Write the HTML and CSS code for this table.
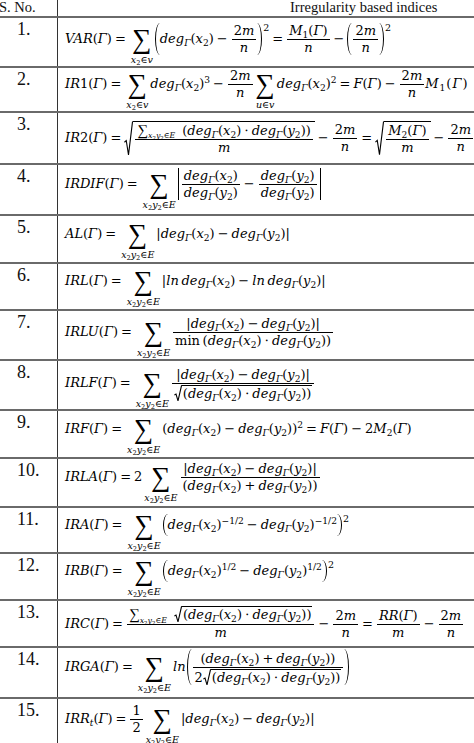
FILE: index.html
```html
<!DOCTYPE html>
<html>
<head>
<meta charset="utf-8">
<link rel="stylesheet" href="styles.css">
</head>
<body>
<div class="tbl">
  <div class="row hd"><div class="no">S. No.</div><div class="cell">Irregularity based indices</div></div>

  <!-- 1 -->
  <div class="row r1"><div class="no">1.</div><div class="cell s"><div class="f">
    <span class="t"><i>VAR</i>(<i>Γ</i>)</span><span class="op">=</span>
    <span class="sum"><span class="sig">∑</span><span class="lim"><i>x</i><sub>2</sub>∈<i>v</i></span></span>
    <span class="pw"><span class="fence">
      <span class="t"><i>deg</i><sub><i>Γ</i></sub>(<i>x</i><sub>2</sub>)</span><span class="op">−</span>
      <span class="frac"><span class="num">2<i>m</i></span><span class="den"><i>n</i></span></span>
    </span><span class="ex">2</span></span>
    <span class="op">=</span>
    <span class="frac"><span class="num"><i>M</i><sub>1</sub>(<i>Γ</i>)</span><span class="den"><i>n</i></span></span>
    <span class="op">−</span>
    <span class="pw"><span class="fence">
      <span class="frac"><span class="num">2<i>m</i></span><span class="den"><i>n</i></span></span>
    </span><span class="ex">2</span></span>
  </div></div></div>

  <!-- 2 -->
  <div class="row r2"><div class="no">2.</div><div class="cell s"><div class="f">
    <span class="t"><i>IR</i>1(<i>Γ</i>)</span><span class="op">=</span>
    <span class="sum"><span class="sig">∑</span><span class="lim"><i>x</i><sub>2</sub>∈<i>v</i></span></span>
    <span class="t"><i>deg</i><sub><i>Γ</i></sub>(<i>x</i><sub>2</sub>)<sup>3</sup></span><span class="op">−</span>
    <span class="frac"><span class="num">2<i>m</i></span><span class="den"><i>n</i></span></span>
    <span class="sum"><span class="sig">∑</span><span class="lim"><i>u</i>∈<i>v</i></span></span>
    <span class="t"><i>deg</i><sub><i>Γ</i></sub>(<i>x</i><sub>2</sub>)<sup>2</sup></span><span class="op">=</span>
    <span class="t"><i>F</i>(<i>Γ</i>)</span><span class="op">−</span>
    <span class="frac"><span class="num">2<i>m</i></span><span class="den"><i>n</i></span></span>
    <span class="t wide"><i>M</i><sub>1</sub>(<i>Γ</i>)</span>
  </div></div></div>

  <!-- 3 -->
  <div class="row r3"><div class="no">3.</div><div class="cell"><div class="f">
    <span class="t"><i>IR</i>2(<i>Γ</i>)</span><span class="op">=</span>
    <span class="sqrt"><span class="rs"><svg viewBox="0 0 10 100" preserveAspectRatio="none"><path d="M0.5 62 L2.5 57 L5 99 L9.5 1" fill="none" stroke="#000" stroke-width="1.1" vector-effect="non-scaling-stroke"/></svg></span><span class="rad">
      <span class="frac"><span class="num"><span class="ssig">∑</span><sub class="sl"><i>x</i><sub>2</sub><i>y</i><sub>2</sub>∈<i>E</i></sub><span class="gap"></span>(<i>deg</i><sub><i>Γ</i></sub>(<i>x</i><sub>2</sub>)<span class="bo">⋅</span><i>deg</i><sub><i>Γ</i></sub>(<i>y</i><sub>2</sub>))</span><span class="den"><i>m</i></span></span>
    </span></span>
    <span class="op">−</span>
    <span class="frac"><span class="num">2<i>m</i></span><span class="den"><i>n</i></span></span>
    <span class="op">=</span>
    <span class="sqrt"><span class="rs"><svg viewBox="0 0 10 100" preserveAspectRatio="none"><path d="M0.5 62 L2.5 57 L5 99 L9.5 1" fill="none" stroke="#000" stroke-width="1.1" vector-effect="non-scaling-stroke"/></svg></span><span class="rad">
      <span class="frac"><span class="num"><i>M</i><sub>2</sub>(<i>Γ</i>)</span><span class="den"><i>m</i></span></span>
    </span></span>
    <span class="op">−</span>
    <span class="frac"><span class="num">2<i>m</i></span><span class="den"><i>n</i></span></span>
  </div></div></div>

  <!-- 4 -->
  <div class="row r4"><div class="no">4.</div><div class="cell s"><div class="f">
    <span class="t"><i>IRDIF</i>(<i>Γ</i>)</span><span class="op">=</span>
    <span class="sum"><span class="sig">∑</span><span class="lim"><i>x</i><sub>2</sub><i>y</i><sub>2</sub>∈<i>E</i></span></span>
    <span class="fence abs">
      <span class="frac"><span class="num"><i>deg</i><sub><i>Γ</i></sub>(<i>x</i><sub>2</sub>)</span><span class="den"><i>deg</i><sub><i>Γ</i></sub>(<i>y</i><sub>2</sub>)</span></span>
      <span class="op">−</span>
      <span class="frac"><span class="num"><i>deg</i><sub><i>Γ</i></sub>(<i>y</i><sub>2</sub>)</span><span class="den"><i>deg</i><sub><i>Γ</i></sub>(<i>y</i><sub>2</sub>)</span></span>
    </span>
  </div></div></div>

  <!-- 5 -->
  <div class="row r5"><div class="no">5.</div><div class="cell s"><div class="f">
    <span class="t"><i>AL</i>(<i>Γ</i>)</span><span class="op">=</span>
    <span class="sum"><span class="sig">∑</span><span class="lim"><i>x</i><sub>2</sub><i>y</i><sub>2</sub>∈<i>E</i></span></span>
    <span class="t">|<i>deg</i><sub><i>Γ</i></sub>(<i>x</i><sub>2</sub>)<span class="bo">−</span><i>deg</i><sub><i>Γ</i></sub>(<i>y</i><sub>2</sub>)|</span>
  </div></div></div>

  <!-- 6 -->
  <div class="row r6"><div class="no">6.</div><div class="cell s"><div class="f">
    <span class="t"><i>IRL</i>(<i>Γ</i>)</span><span class="op">=</span>
    <span class="sum"><span class="sig">∑</span><span class="lim"><i>x</i><sub>2</sub><i>y</i><sub>2</sub>∈<i>E</i></span></span>
    <span class="t">|<i>ln</i>&#8201;<i>deg</i><sub><i>Γ</i></sub>(<i>x</i><sub>2</sub>)<span class="bo">−</span><i>ln</i>&#8201;<i>deg</i><sub><i>Γ</i></sub>(<i>y</i><sub>2</sub>)|</span>
  </div></div></div>

  <!-- 7 -->
  <div class="row r7"><div class="no">7.</div><div class="cell s"><div class="f">
    <span class="t"><i>IRLU</i>(<i>Γ</i>)</span><span class="op">=</span>
    <span class="sum"><span class="sig">∑</span><span class="lim"><i>x</i><sub>2</sub><i>y</i><sub>2</sub>∈<i>E</i></span></span>
    <span class="frac"><span class="num">|<i>deg</i><sub><i>Γ</i></sub>(<i>x</i><sub>2</sub>)<span class="bo">−</span><i>deg</i><sub><i>Γ</i></sub>(<i>y</i><sub>2</sub>)|</span><span class="den">min&#8201;(<i>deg</i><sub><i>Γ</i></sub>(<i>x</i><sub>2</sub>)<span class="bo">⋅</span><i>deg</i><sub><i>Γ</i></sub>(<i>y</i><sub>2</sub>))</span></span>
  </div></div></div>

  <!-- 8 -->
  <div class="row r8"><div class="no">8.</div><div class="cell s"><div class="f">
    <span class="t"><i>IRLF</i>(<i>Γ</i>)</span><span class="op">=</span>
    <span class="sum"><span class="sig">∑</span><span class="lim"><i>x</i><sub>2</sub><i>y</i><sub>2</sub>∈<i>E</i></span></span>
    <span class="frac"><span class="num">|<i>deg</i><sub><i>Γ</i></sub>(<i>x</i><sub>2</sub>)<span class="bo">−</span><i>deg</i><sub><i>Γ</i></sub>(<i>y</i><sub>2</sub>)|</span><span class="den"><span class="sqrt sm"><span class="rs"><svg viewBox="0 0 10 100" preserveAspectRatio="none"><path d="M0.5 62 L2.5 57 L5 99 L9.5 1" fill="none" stroke="#000" stroke-width="1.1" vector-effect="non-scaling-stroke"/></svg></span><span class="rad">(<i>deg</i><sub><i>Γ</i></sub>(<i>x</i><sub>2</sub>)<span class="bo">⋅</span><i>deg</i><sub><i>Γ</i></sub>(<i>y</i><sub>2</sub>))</span></span></span></span>
  </div></div></div>

  <!-- 9 -->
  <div class="row r9"><div class="no">9.</div><div class="cell s"><div class="f">
    <span class="t"><i>IRF</i>(<i>Γ</i>)</span><span class="op">=</span>
    <span class="sum"><span class="sig">∑</span><span class="lim"><i>x</i><sub>2</sub><i>y</i><sub>2</sub>∈<i>E</i></span></span>
    <span class="t">(<i>deg</i><sub><i>Γ</i></sub>(<i>x</i><sub>2</sub>)<span class="bo">−</span><i>deg</i><sub><i>Γ</i></sub>(<i>y</i><sub>2</sub>))<sup>2</sup></span><span class="op">=</span>
    <span class="t"><i>F</i>(<i>Γ</i>)<span class="bo">−</span>2<i>M</i><sub>2</sub>(<i>Γ</i>)</span>
  </div></div></div>

  <!-- 10 -->
  <div class="row r10"><div class="no">10.</div><div class="cell s"><div class="f">
    <span class="t"><i>IRLA</i>(<i>Γ</i>)</span><span class="op">=</span><span class="t">2</span>
    <span class="sum"><span class="sig">∑</span><span class="lim"><i>x</i><sub>2</sub><i>y</i><sub>2</sub>∈<i>E</i></span></span>
    <span class="frac"><span class="num">|<i>deg</i><sub><i>Γ</i></sub>(<i>x</i><sub>2</sub>)<span class="bo">−</span><i>deg</i><sub><i>Γ</i></sub>(<i>y</i><sub>2</sub>)|</span><span class="den">(<i>deg</i><sub><i>Γ</i></sub>(<i>x</i><sub>2</sub>)<span class="bo">+</span><i>deg</i><sub><i>Γ</i></sub>(<i>y</i><sub>2</sub>))</span></span>
  </div></div></div>

  <!-- 11 -->
  <div class="row r11"><div class="no">11.</div><div class="cell s"><div class="f">
    <span class="t"><i>IRA</i>(<i>Γ</i>)</span><span class="op">=</span>
    <span class="sum"><span class="sig">∑</span><span class="lim"><i>x</i><sub>2</sub><i>y</i><sub>2</sub>∈<i>E</i></span></span>
    <span class="pw"><span class="fence tall"><span class="t"><i>deg</i><sub><i>Γ</i></sub>(<i>x</i><sub>2</sub>)<sup>−1/2</sup><span class="bo">−</span><i>deg</i><sub><i>Γ</i></sub>(<i>y</i><sub>2</sub>)<sup>−1/2</sup></span></span><span class="ex">2</span></span>
  </div></div></div>

  <!-- 12 -->
  <div class="row r12"><div class="no">12.</div><div class="cell s"><div class="f">
    <span class="t"><i>IRB</i>(<i>Γ</i>)</span><span class="op">=</span>
    <span class="sum"><span class="sig">∑</span><span class="lim"><i>x</i><sub>2</sub><i>y</i><sub>2</sub>∈<i>E</i></span></span>
    <span class="pw"><span class="fence tall"><span class="t"><i>deg</i><sub><i>Γ</i></sub>(<i>x</i><sub>2</sub>)<sup>1/2</sup><span class="bo">−</span><i>deg</i><sub><i>Γ</i></sub>(<i>y</i><sub>2</sub>)<sup>1/2</sup></span></span><span class="ex">2</span></span>
  </div></div></div>

  <!-- 13 -->
  <div class="row r13"><div class="no">13.</div><div class="cell"><div class="f">
    <span class="t"><i>IRC</i>(<i>Γ</i>)</span><span class="op">=</span>
    <span class="frac"><span class="num"><span class="ssig">∑</span><sub class="sl"><i>x</i><sub>2</sub><i>y</i><sub>2</sub>∈<i>E</i></sub><span class="gap"></span><span class="sqrt sm"><span class="rs"><svg viewBox="0 0 10 100" preserveAspectRatio="none"><path d="M0.5 62 L2.5 57 L5 99 L9.5 1" fill="none" stroke="#000" stroke-width="1.1" vector-effect="non-scaling-stroke"/></svg></span><span class="rad">(<i>deg</i><sub><i>Γ</i></sub>(<i>x</i><sub>2</sub>)<span class="bo">⋅</span><i>deg</i><sub><i>Γ</i></sub>(<i>y</i><sub>2</sub>))</span></span></span><span class="den"><i>m</i></span></span>
    <span class="op">−</span>
    <span class="frac"><span class="num">2<i>m</i></span><span class="den"><i>n</i></span></span>
    <span class="op">=</span>
    <span class="frac"><span class="num"><i>RR</i>(<i>Γ</i>)</span><span class="den"><i>m</i></span></span>
    <span class="op">−</span>
    <span class="frac"><span class="num">2<i>m</i></span><span class="den"><i>n</i></span></span>
  </div></div></div>

  <!-- 14 -->
  <div class="row r14"><div class="no">14.</div><div class="cell s"><div class="f">
    <span class="t"><i>IRGA</i>(<i>Γ</i>)</span><span class="op">=</span>
    <span class="sum"><span class="sig">∑</span><span class="lim"><i>x</i><sub>2</sub><i>y</i><sub>2</sub>∈<i>E</i></span></span>
    <span class="t ln"><i>ln</i></span>
    <span class="fence">
      <span class="frac"><span class="num">(<i>deg</i><sub><i>Γ</i></sub>(<i>x</i><sub>2</sub>)<span class="bo">+</span><i>deg</i><sub><i>Γ</i></sub>(<i>y</i><sub>2</sub>))</span><span class="den">2<span class="sqrt sm"><span class="rs"><svg viewBox="0 0 10 100" preserveAspectRatio="none"><path d="M0.5 62 L2.5 57 L5 99 L9.5 1" fill="none" stroke="#000" stroke-width="1.1" vector-effect="non-scaling-stroke"/></svg></span><span class="rad">(<i>deg</i><sub><i>Γ</i></sub>(<i>x</i><sub>2</sub>)<span class="bo">⋅</span><i>deg</i><sub><i>Γ</i></sub>(<i>y</i><sub>2</sub>))</span></span></span></span>
    </span>
  </div></div></div>

  <!-- 15 -->
  <div class="row r15"><div class="no">15.</div><div class="cell s"><div class="f">
    <span class="t"><i>IRR</i><sub><i>t</i></sub>(<i>Γ</i>)</span><span class="op">=</span>
    <span class="frac"><span class="num">1</span><span class="den">2</span></span>
    <span class="sum"><span class="sig">∑</span><span class="lim"><i>x</i><sub>2</sub><i>y</i><sub>2</sub>∈<i>E</i></span></span>
    <span class="t">|<i>deg</i><sub><i>Γ</i></sub>(<i>x</i><sub>2</sub>)<span class="bo">−</span><i>deg</i><sub><i>Γ</i></sub>(<i>y</i><sub>2</sub>)|</span>
  </div></div></div>
</div>
</body>
</html>
```
FILE: styles.css
```css
* { box-sizing: border-box; margin: 0; padding: 0; }
html, body { background: #fff; }
body {
  width: 474px;
  height: 743px;
  overflow: hidden;
  font-family: "Liberation Serif", "Times New Roman", serif;
  color: #111;
}
.tbl { width: 640px; }
.row {
  display: grid;
  grid-template-columns: 58px 1fr;
  border-bottom: 2px solid #6a6a6a;
}
.hd { height: 18px; }
.r1 { height: 50px; } .r2 { height: 45px; } .r3 { height: 52px; }
.r4 { height: 51px; } .r5 { height: 48px; } .r6 { height: 47px; }
.r7 { height: 50px; } .r8 { height: 50px; } .r9 { height: 48px; }
.r10 { height: 49px; } .r11 { height: 46px; } .r12 { height: 47px; }
.r13 { height: 47px; } .r14 { height: 51px; } .r15 { height: 50px; border-bottom: 0; }

.no {
  border-right: 1.5px solid #333;
  padding: 2px 0 0 17px;
  font-size: 18px;
  line-height: 18px;
}
.hd .no { padding: 0; text-indent: -1px; font-size: 14.5px; line-height: 15px; }
.hd .cell { display: block; padding-left: 232px; font-size: 14.5px; line-height: 15px; }

.cell { display: flex; align-items: center; padding-left: 7px; min-width: 0; }
.cell.s { padding-bottom: 11px; }
.r1 .cell.s { padding-bottom: 6px; }
.r7 .cell.s { padding-bottom: 6px; }
.r8 .cell.s { padding-bottom: 5px; }

.f {
  display: flex;
  align-items: center;
  white-space: nowrap;
  font-family: "DejaVu Serif", serif;
  font-size: 13px;
  line-height: 16px;
  color: #000;
}
i { font-style: italic; }
sub, sup { font-size: 70%; line-height: 0; }
sub { vertical-align: -0.3em; }
sup { vertical-align: 0.55em; }

.op { margin: 0 3px; }
.bo { margin: 0 3px; }
.gap { display: inline-block; width: 7px; }
.ln { margin-right: 1px; }
.wide { letter-spacing: 1px; }

.sum {
  display: flex;
  flex-direction: column;
  align-items: center;
  margin: 0 2px -12px;
}
.sig {
  font-family: "Liberation Serif", serif;
  font-size: 27px;
  line-height: 28px;
  height: 28px;
}
.lim { font-size: 9.5px; line-height: 11px; margin-top: 1px; }

.ssig { font-family: "Liberation Serif", serif; font-size: 15px; }
.sl { font-size: 60%; vertical-align: -0.45em; }

.frac {
  display: inline-grid;
  grid-auto-rows: 1fr;
  justify-items: center;
  vertical-align: middle;
  margin: 0 1px;
}
.num, .den { line-height: 14px; padding: 0 2px; }
.num { align-self: end; padding-bottom: 1px; }
.den { align-self: start; justify-self: stretch; text-align: center; border-top: 1px solid #000; padding-top: 1px; }

.sqrt { display: flex; align-items: stretch; }
.sqrt.sm { display: inline-flex; vertical-align: baseline; }
.rs { flex: none; width: 9px; align-self: stretch; contain: size; }
.sm .rs { width: 8px; }
.rs svg { display: block; width: 100%; height: 100%; }
.rad { display: flex; align-items: center; border-top: 1px solid #000; padding: 1px 1px 0; }
.sm .rad { display: block; align-self: baseline; padding-top: 1px; }

.pw { display: flex; align-items: flex-start; }
.ex { font-size: 9.5px; line-height: 10px; margin-left: 1px; }
.fence { display: flex; align-items: center; }
.fence::before, .fence::after {
  content: "";
  flex: none;
  align-self: stretch;
  width: 4px;
  border: 0 solid #000;
}
.fence::before { border-left-width: 1.2px; border-radius: 100% 0 0 100% / 50% 0 0 50%; }
.fence::after { border-right-width: 1.2px; border-radius: 0 100% 100% 0 / 0 50% 50% 0; }
.fence.tall > .t { padding: 3px 0; }
.fence.abs::before, .fence.abs::after { width: 0; border-radius: 0; border-width: 0; border-left-width: 1px; }
.fence.abs::before { margin-right: 2px; }
.fence.abs::after { margin-left: 2px; }
```
